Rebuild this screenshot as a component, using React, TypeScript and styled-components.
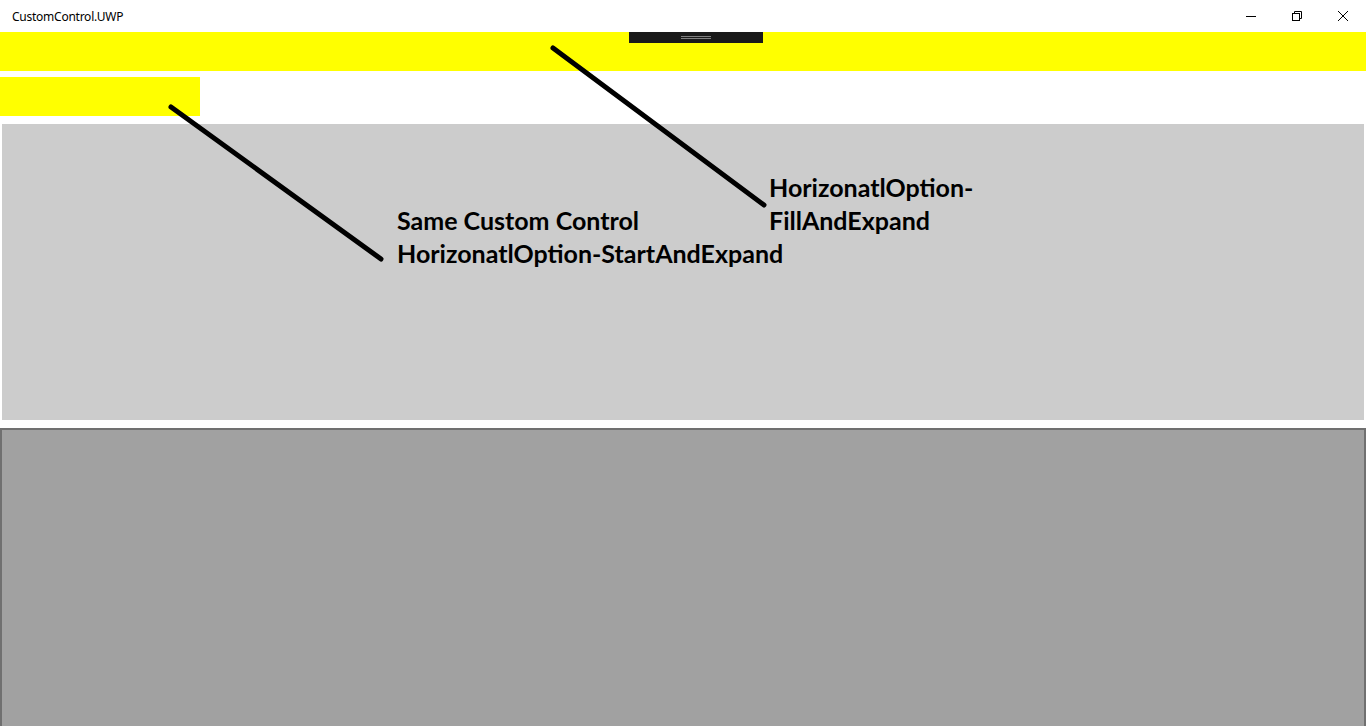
import React from 'react';
import styled, { createGlobalStyle } from 'styled-components';

const Global = createGlobalStyle`
	html, body {
		margin: 0;
		padding: 0;
		background: #ffffff;
		overflow: hidden;
	}
	* {
		box-sizing: border-box;
	}
`;

const Window = styled.div`
	position: relative;
	display: flex;
	flex-direction: column;
	width: 1366px;
	height: 726px;
	background: #ffffff;
	font-family: 'Noto Sans', 'Open Sans', sans-serif;
`;

const TitleBar = styled.div`
	display: flex;
	flex-direction: row;
	align-items: center;
	height: 32px;
	flex: 0 0 32px;
	padding-left: 12px;
	span {
		flex: 1;
		font-size: 12px;
		color: #000000;
		letter-spacing: -0.25px;
	}
`;

const CaptionButton = styled.div`
	display: flex;
	align-items: center;
	justify-content: center;
	width: 46px;
	height: 32px;
`;

const FillBar = styled.div`
	flex: 0 0 39px;
	background: #ffff00;
	display: flex;
	flex-direction: row;
	align-items: flex-start;
`;

const Handle = styled.div`
	width: 134px;
	height: 11px;
	margin-left: 629px;
	background: #1a1a1a;
	display: flex;
	flex-direction: column;
	align-items: center;
	justify-content: center;
	gap: 1px;
	i {
		display: block;
		width: 30px;
		height: 1px;
		background: #808080;
	}
`;

const StartBox = styled.div`
	flex: 0 0 39px;
	width: 200px;
	margin-top: 6px;
	background: #ffff00;
`;

const LightPanel = styled.div`
	flex: 0 0 296px;
	margin: 8px 2px 0 2px;
	background: #cccccc;
`;

const DarkPanel = styled.div`
	flex: 1;
	margin-top: 8px;
	background: #a1a1a1;
	border: 2px solid #707070;
	border-bottom: none;
`;

const Overlay = styled.svg`
	position: absolute;
	left: 0;
	top: 0;
	pointer-events: none;
`;

const Note = styled.div<{ $x: number; $y: number }>`
	position: absolute;
	left: ${({ $x }) => $x}px;
	top: ${({ $y }) => $y}px;
	font-family: Lato, 'Open Sans', sans-serif;
	font-weight: 700;
	font-size: 25px;
	line-height: 33px;
	color: #000000;
	white-space: nowrap;
`;

const App: React.FunctionComponent = () => {
	return (
		<>
			<Global />
			<Window>
				<TitleBar>
					<span>CustomControl.UWP</span>
					<CaptionButton>
						<svg width="10" height="10" viewBox="0 0 10 10">
							<path d="M0 5.5 H10" stroke="#000" strokeWidth="1" />
						</svg>
					</CaptionButton>
					<CaptionButton>
						<svg width="10" height="10" viewBox="0 0 10 10">
							<rect x="0.5" y="2.5" width="7" height="7" fill="none" stroke="#000" strokeWidth="1" />
							<path d="M2.5 2.5 V0.5 H9.5 V7.5 H7.5" fill="none" stroke="#000" strokeWidth="1" />
						</svg>
					</CaptionButton>
					<CaptionButton>
						<svg width="10" height="10" viewBox="0 0 10 10">
							<path d="M0 0 L10 10 M10 0 L0 10" stroke="#000" strokeWidth="1" />
						</svg>
					</CaptionButton>
				</TitleBar>
				<FillBar>
					<Handle>
						<i />
						<i />
					</Handle>
				</FillBar>
				<StartBox />
				<LightPanel />
				<DarkPanel />

				<Overlay width="1366" height="726">
					<line x1="553" y1="48" x2="764" y2="205" stroke="#000" strokeWidth="5" strokeLinecap="round" />
					<line x1="171" y1="107" x2="381" y2="259" stroke="#000" strokeWidth="5" strokeLinecap="round" />
				</Overlay>
				<Note $x={397} $y={204}>
					Same Custom Control
					<br />
					HorizonatlOption-StartAndExpand
				</Note>
				<Note $x={769} $y={171}>
					HorizonatlOption-
					<br />
					FillAndExpand
				</Note>
			</Window>
		</>
	);
};

export default App;
